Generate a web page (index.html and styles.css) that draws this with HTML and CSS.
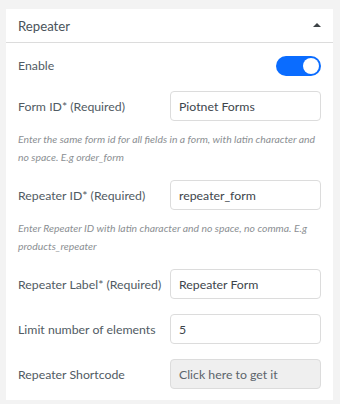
FILE: index.html
```html
<!DOCTYPE html>
<html>
<head>
<meta charset="utf-8">
<link rel="stylesheet" href="styles.css">
</head>
<body>
<div class="panel">
  <div class="header">
    <span class="title">Repeater</span>
    <span class="caret"></span>
  </div>
  <div class="body">
    <div class="row">
      <span class="label">Enable</span>
      <span class="toggle"><span class="knob"></span></span>
    </div>
    <div class="field">
      <div class="row">
        <span class="label">Form ID* (Required)</span>
        <div class="input">Piotnet Forms</div>
      </div>
      <p class="help">Enter the same form id for all fields in a form, with latin character and no space. E.g order_form</p>
    </div>
    <div class="field">
      <div class="row">
        <span class="label">Repeater ID* (Required)</span>
        <div class="input">repeater_form</div>
      </div>
      <p class="help">Enter Repeater ID with latin character and no space, no comma. E.g products_repeater</p>
    </div>
    <div class="row">
      <span class="label">Repeater Label* (Required)</span>
      <div class="input">Repeater Form</div>
    </div>
    <div class="row">
      <span class="label">Limit number of elements</span>
      <div class="input">5</div>
    </div>
    <div class="row last">
      <span class="label">Repeater Shortcode</span>
      <div class="input disabled">Click here to get it</div>
    </div>
  </div>
</div>
</body>
</html>
```
FILE: styles.css
```css
html, body {
  margin: 0;
  padding: 0;
  background: #f3f3f3;
}
body {
  padding: 9px 7px 4px 6px;
  font-family: Lato, "Noto Sans", sans-serif;
  color: #4f5a63;
}
.panel {
  background: #fff;
  width: 327px;
}
.header {
  height: 33px;
  border-bottom: 1px solid #dcdcdc;
  display: flex;
  align-items: center;
  justify-content: space-between;
  padding: 0 12px;
}
.title {
  font-size: 13.2px;
  color: #4a535b;
  margin-top: 1px;
}
.caret {
  width: 0;
  height: 0;
  border-left: 4px solid transparent;
  border-right: 4px solid transparent;
  border-bottom: 4px solid #3c4246;
  margin-top: -2px;
}
.body {
  padding: 12px 12px 11px 12px;
}
.row {
  display: flex;
  align-items: center;
  justify-content: space-between;
  margin-bottom: 15px;
}
.field {
  margin-bottom: 14px;
}
.field .row {
  margin-bottom: 0;
}
.row.last {
  margin-bottom: 0;
}
.label {
  flex: 1 1 auto;
  font-size: 12.3px;
  color: #515b63;
  white-space: nowrap;
}
.toggle {
  width: 45px;
  height: 20px;
  border-radius: 10px;
  background: #0a6cff;
  display: flex;
  align-items: center;
  justify-content: flex-end;
  box-sizing: border-box;
  padding-right: 2px;
  margin-top: 1px;
}
.knob {
  width: 16px;
  height: 16px;
  border-radius: 50%;
  background: #fff;
}
.input {
  flex: 0 0 151px;
  height: 30px;
  box-sizing: border-box;
  border: 1px solid #dcdcdc;
  border-radius: 4px;
  padding: 0 8px;
  display: flex;
  align-items: center;
  font-size: 12.3px;
  color: #3d454c;
}
.input.disabled {
  background: #efefef;
  color: #5b646b;
}
.help {
  margin: 9px 0 0 0;
  font-size: 10.4px;
  line-height: 18px;
  font-style: italic;
  color: #8b8f93;
}
```
